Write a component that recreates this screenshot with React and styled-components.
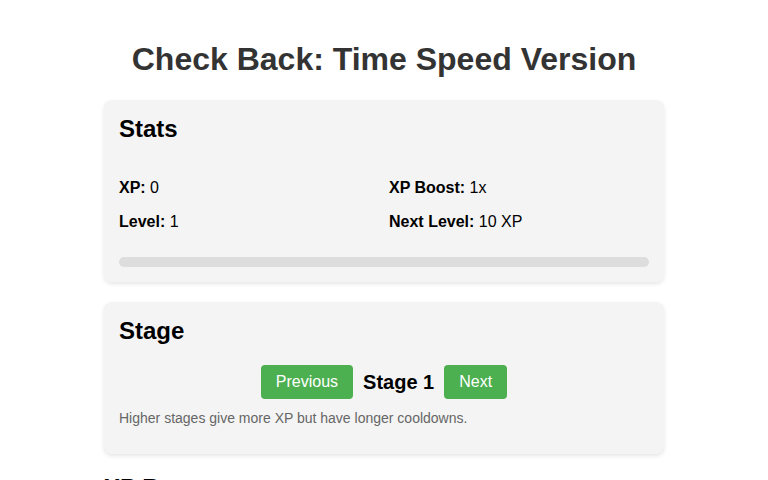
import React from 'react'
import styled, { createGlobalStyle } from 'styled-components'

const GlobalStyle = createGlobalStyle`
  body {
    margin: 0;
    padding: 20px;
    background: #fff;
    font-family: "Liberation Sans", Arial, sans-serif;
    color: #000;
  }
`

const Page = styled.div`
  max-width: 560px;
  margin: 0 auto;
`

const Title = styled.h1`
  color: #333;
  font-size: 32px;
  text-align: center;
  margin: 21px 0 22px;
`

const Card = styled.section`
  background: #f4f4f4;
  border-radius: 8px;
  padding: 15px;
  margin-bottom: 20px;
  box-shadow: 0 2px 4px rgba(0, 0, 0, 0.1);
`

const CardTitle = styled.h2`
  font-size: 24px;
  margin: 0;
`

const StatsGrid = styled.div`
  display: grid;
  grid-template-columns: 1fr 1fr;
  column-gap: 10px;
  row-gap: 16px;
  margin-top: 36px;
  font-size: 16px;
`

const Stat = styled.div`
  b { font-weight: bold; }
`

const ProgressTrack = styled.div`
  margin-top: 26px;
  height: 10px;
  border-radius: 5px;
  background: #ddd;
  overflow: hidden;
`

const ProgressFill = styled.div`
  height: 100%;
  background: #4caf50;
`

const StageRow = styled.div`
  display: flex;
  justify-content: center;
  align-items: center;
  gap: 10px;
  margin-top: 20px;
`

const Button = styled.button`
  background: #4caf50;
  color: #fff;
  border: none;
  border-radius: 4px;
  padding: 8px 15px;
  font-family: "Liberation Sans", Arial, sans-serif;
  font-size: 16px;
  line-height: 18px;
  cursor: pointer;
`

const StageLabel = styled.span`
  font-size: 20px;
  font-weight: bold;
`

const Note = styled.p`
  font-size: 14px;
  color: #666;
  margin: 11px 0 13px;
`

const SectionTitle = styled.h2`
  font-size: 24px;
  margin: 0;
`

export default function App() {
  const xp = 0
  const needed = 10
  return (
    <Page>
      <GlobalStyle />
      <Title>Check Back: Time Speed Version</Title>
      <Card>
        <CardTitle>Stats</CardTitle>
        <StatsGrid>
          <Stat><b>XP:</b> 0</Stat>
          <Stat><b>XP Boost:</b> 1x</Stat>
          <Stat><b>Level:</b> 1</Stat>
          <Stat><b>Next Level:</b> 10 XP</Stat>
        </StatsGrid>
        <ProgressTrack>
          <ProgressFill style={{ width: `${(xp / needed) * 100}%` }} />
        </ProgressTrack>
      </Card>
      <Card>
        <CardTitle>Stage</CardTitle>
        <StageRow>
          <Button>Previous</Button>
          <StageLabel>Stage 1</StageLabel>
          <Button>Next</Button>
        </StageRow>
        <Note>Higher stages give more XP but have longer cooldowns.</Note>
      </Card>
      <SectionTitle>XP Boosts</SectionTitle>
    </Page>
  )
}
